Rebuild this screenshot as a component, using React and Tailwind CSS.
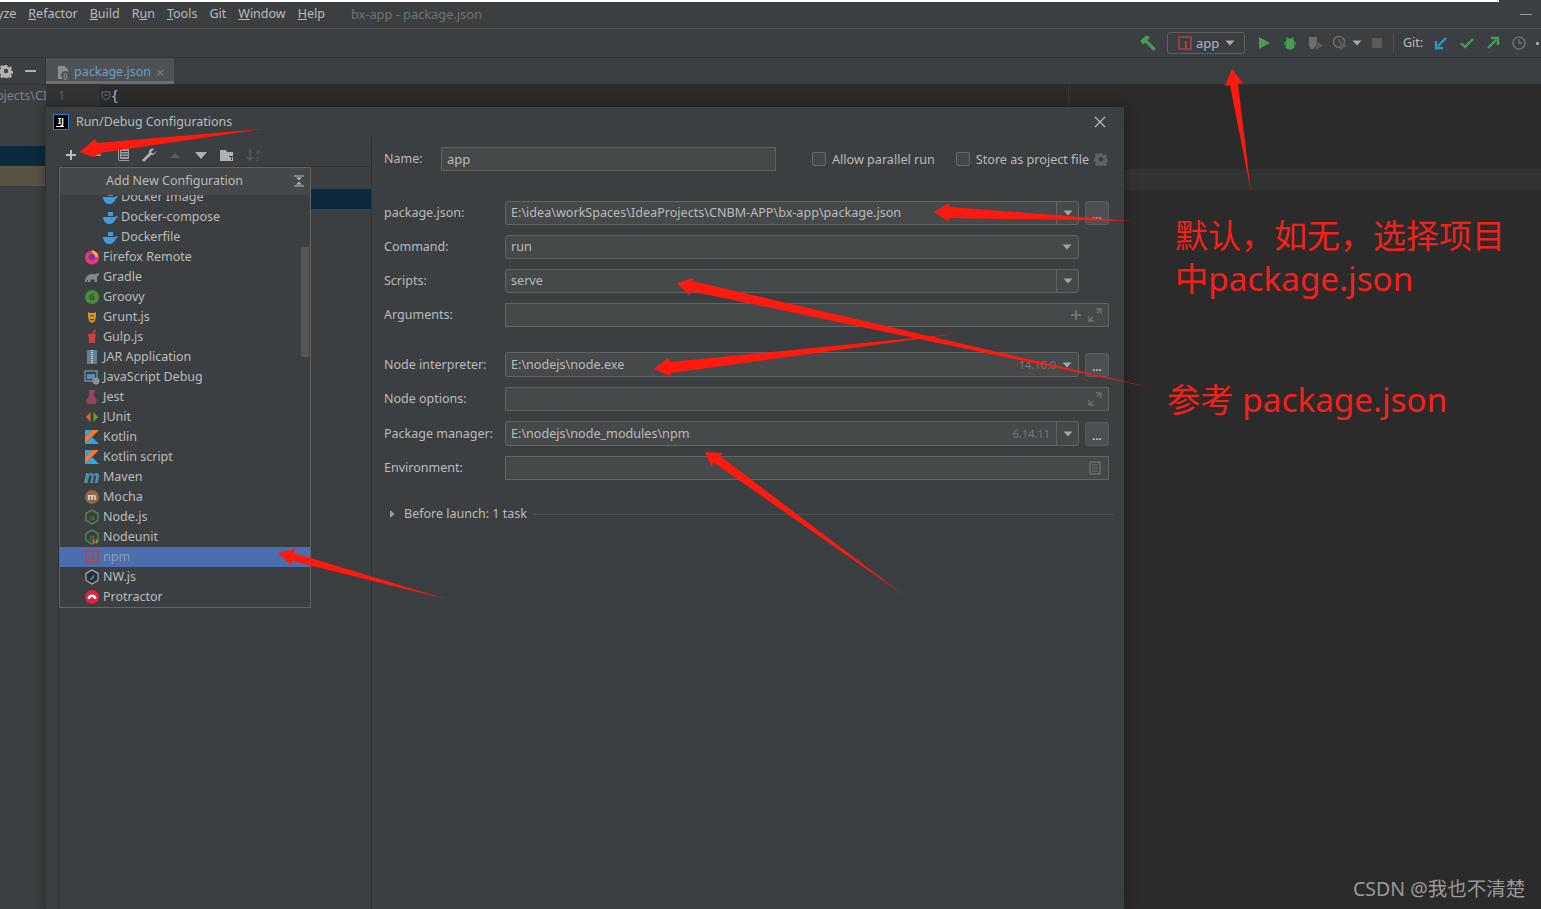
import React from "react";

const Svg = ({ s = 16, v = "0 0 16 16", className = "", children }) => (
  <svg width={s} height={s} viewBox={v} className={"shrink-0 " + className}>{children}</svg>
);

const Caret = ({ c = "#a3a6a9", s = 12 }) => (
  <Svg s={s} v="0 0 12 12"><path d="M1.500 3.500h9L6 8.500z" fill={c} /></Svg>
);

const Gear = ({ c = "#afb1b3", s = 14 }) => (
  <Svg s={s} v="0 0 16 16">
    <path fillRule="evenodd" fill={c} d="M6.6 1h2.8l.4 2 1.3.6 1.8-1.1 2 2-1.1 1.8.6 1.3 2 .4v2.8l-2 .4-.6 1.3 1.1 1.8-2 2-1.8-1.1-1.3.6-.4 2H6.6l-.4-2-1.3-.6-1.8 1.1-2-2 1.1-1.8-.6-1.3-2-.4V6.6l2-.4.6-1.3-1.1-1.8 2-2 1.8 1.1 1.3-.6zM8 5.500a2.500 2.500 0 1 0 0 5 2.500 2.500 0 0 0 0-5z" />
  </Svg>
);

const Npm = ({ s = 14 }) => (
  <Svg s={s} v="0 0 14 14">
    <rect x="1" y="1" width="12" height="12" fill="none" stroke="#c93d3d" strokeWidth="1.400" />
    <rect x="7" y="5" width="1.600" height="7" fill="#c93d3d" />
  </Svg>
);

const Docker = () => (
  <Svg s={15} v="0 0 15 15">
    <rect x="5" y="2" width="5" height="4" fill="#3d9be0" />
    <path d="M0 7h12l1.200-1 1.800.8c-.6 1.200-1.400 1.600-2.200 1.600C12 11 10 14 6 14 2.500 14 .4 11 0 7z" fill="#3d9be0" />
  </Svg>
);

const Hex = ({ c = "#5c8f50", extra }) => (
  <Svg s={16} v="0 0 16 16">
    <path d="M8 1l6 3.400v7L8 15l-6-3.600v-7z" fill="none" stroke={c} strokeWidth="1.200" />
    <text x="8" y="10.500" textAnchor="middle" fontSize="6" fill={c} fontFamily="Noto Sans">JS</text>
    {extra}
  </Svg>
);

const Kotlin = () => (
  <Svg s={14} v="0 0 14 14">
    <path d="M0 0h7L0 7z" fill="#2fa6e8" />
    <path d="M7 0h7L0 14V7z" fill="#ee7b3a" />
    <path d="M0 14l7-7 7 7z" fill="#2fa6e8" />
  </Svg>
);

const listItems = [
  ["Docker Image", <Docker />, true],
  ["Docker-compose", <Docker />, true],
  ["Dockerfile", <Docker />, true],
  ["Firefox Remote", <Svg><circle cx="8" cy="8.500" r="7" fill="#e8396a" /><path d="M8 1c3 1 6 3 6 7H9z" fill="#f7b733" /><circle cx="8" cy="8" r="3.200" fill="#6a3bb5" /></Svg>],
  ["Gradle", <Svg><path d="M1 13c0-5 3-8 7-8 2 0 3 1 4 0 1-1.500 3-1 3 .5 0 1.500-1.500 2-2 2v5.500h-2.500v-2.500h-4v2.500H4v-2H3v2z" fill="#7c8a93" /></Svg>],
  ["Groovy", <Svg><circle cx="8" cy="8" r="7" fill="#4d8a3f" /><text x="8" y="11" textAnchor="middle" fontSize="8" fontWeight="700" fill="#2f5527" fontFamily="Noto Sans">G</text></Svg>],
  ["Grunt.js", <Svg><path d="M4 3l2 1h4l2-1v4l-1 5-3 2-3-2-1-5z" fill="#d89a2b" /><rect x="6" y="6" width="1.500" height="1.500" fill="#6e3d10" /><rect x="8.500" y="6" width="1.500" height="1.500" fill="#6e3d10" /><rect x="6" y="10" width="4" height="1.200" fill="#6e3d10" /></Svg>],
  ["Gulp.js", <Svg><path d="M4 5h8l-1 5v4H5v-4z" fill="#c9403f" /><path d="M8.500 5l1.500-4h2l-2 4z" fill="#c9403f" /></Svg>],
  ["JAR Application", <Svg><rect x="3" y="1" width="10" height="14" fill="#5f8296" /><path d="M8 1v14" stroke="#c7d3da" strokeWidth="2" strokeDasharray="1 1" /></Svg>],
  ["JavaScript Debug", <Svg><rect x="1" y="2" width="12" height="10" fill="none" stroke="#8a9aa5" strokeWidth="1.200" /><rect x="3" y="5" width="8" height="5" fill="#4f8fc0" /><circle cx="12" cy="12" r="3.500" fill="#8a9199" /></Svg>],
  ["Jest", <Svg><path d="M5 1h6l-1.500 5 3.500 5-1.500 4h-8L2 11l3-3z" fill="#99425b" /></Svg>],
  ["JUnit", <Svg><path d="M6.500 3v10L2 8z" fill="#e2682b" /><path d="M9.500 3v10L14 8z" fill="#62a33f" /></Svg>],
  ["Kotlin", <Kotlin />],
  ["Kotlin script", <Kotlin />],
  ["Maven", <Svg><path d="M0 14L2 4h2.500l-.3 1.500C5 4.500 6 4 7 4s2 .6 2.300 1.700C10.200 4.600 11.300 4 12.400 4c2 0 3.100 1.300 2.700 3.400L13.800 14h-3l1.200-6c.2-1-.2-1.500-1-1.500s-1.400.6-1.600 1.600L9.200 14h-3l1.200-6c.2-1-.2-1.500-1-1.500S5 7.100 4.800 8.100L3.600 14z" fill="#4a8dad" /></Svg>],
  ["Mocha", <Svg><circle cx="8" cy="8" r="7" fill="#8d6748" /><text x="8" y="11" textAnchor="middle" fontSize="9" fontWeight="700" fill="#e8e0d8" fontFamily="Noto Sans">m</text></Svg>],
  ["Node.js", <Hex />],
  ["Nodeunit", <Hex extra={<g><path d="M10.500 10v5L8 12.500z" fill="#e2682b" /><path d="M12 10v5l3-2.500z" fill="#62a33f" /></g>} />],
  ["npm", <Npm />],
  ["NW.js", <Svg><path d="M8 1l6 3.400v7L8 15l-6-3.600v-7z" fill="#2b2d30" stroke="#a9adb1" strokeWidth="1.200" /><path d="M5 11l6-6-2 5z" fill="#4f8fc0" /></Svg>],
  ["Protractor", <Svg><circle cx="8" cy="8" r="7" fill="#e2233f" /><path d="M3.500 10a4.500 4.500 0 0 1 9 0z" fill="#fff" /><path d="M6 10a2 2 0 0 1 4 0z" fill="#e2233f" /></Svg>],
];

const Dots = () => (
  <div className="ml-[6px] w-6 h-6 rounded-[3px] border border-[#5a5d5f] bg-[#4c5052] flex items-end justify-center pb-[4px] text-[#d0d0d0] text-[11px] leading-[10px] font-bold">...</div>
);

const Field = ({ label, value, hint, kind, wide, browse, sep, right, h = "h-6", mt, lt = "" }) => (
  <div className={"flex items-center " + mt}>
    <div className={"w-[121px] shrink-0 text-[#bbbbbb] " + lt}>{label}</div>
    <div className={`${wide ? "w-[604px] rounded-none" : "w-[574px] rounded-[3px]"} ${h} border border-[#646464] bg-[#45494a] flex items-center pl-[5px] text-[#bbbbbb] text-[12.6px]`}>
      <span className="flex-1 truncate leading-[18px]">{value}</span>
      {hint && <span className={`text-[#787878] text-[11px] leading-[14px] ${sep ? "mr-[6px]" : "mr-0"}`}>{hint}</span>}
      {kind === "combo" && (
        <div className={`w-[22px] h-full flex items-center justify-center ${sep ? "border-l border-[#646464]" : ""}`}><Caret /></div>
      )}
      {right}
    </div>
    {browse && <Dots />}
  </div>
);

const Expand = () => (
  <Svg s={14} v="0 0 14 14"><path d="M8 1h5v5M13 1L9 5M1 8v5h5M1 13l4-4" fill="none" stroke="#6f7274" strokeWidth="1.300" /></Svg>
);

const Check = ({ label, className = "" }) => (
  <div className={"flex items-center text-[#bbbbbb] text-[12.6px] " + className}>
    <div className="w-[14px] h-[14px] rounded-[2px] border border-[#6b6b6b] bg-[#43494a] mr-[6px]" />
    <span className="pt-[2px]">{label}</span>
  </div>
);

const U = ({ children, rest }) => (
  <span><span className="underline">{children}</span>{rest}</span>
);

const redPolys = [
  "80,152 95,139 97,143 263,129 100,153 93,157",
  "1232,69 1225,86 1230,85 1251,192 1238,84 1243,83",
  "934,212 949,203 950,207 1132,221 949,218 949,222",
  "677,283 694,278 692,281 1153,388 690,291 690,296",
  "654,369 668,358 670,362 955,334 671,373 670,376",
  "705,452 723,453 720,456 905,596 713,462 712,467",
  "278,553 295,549 294,553 446,599 292,561 291,565",
];

export default function App() {
  return (
    <div className="relative w-[1541px] h-[909px] overflow-hidden bg-[#2b2b2b] text-[12.5px] leading-none" style={{ fontFamily: '"Noto Sans","Noto Sans CJK SC",sans-serif' }}>
      {/* white strip */}
      <div className="h-[2px] bg-[#3c3f41]"><div className="h-full w-[1499px] bg-white" /></div>

      {/* menu */}
      <div className="h-[27px] bg-[#3c3f41] border-b border-[#515151] flex items-center pb-[2px] text-[#bbbbbb] relative">
        <div className="flex gap-3 -ml-[3px] leading-[16px]">
          <span>yze</span>
          <U rest="efactor">R</U>
          <U rest="uild">B</U>
          <span>R<span className="underline">u</span>n</span>
          <U rest="ools">T</U>
          <span>Git</span>
          <U rest="indow">W</U>
          <U rest="elp">H</U>
        </div>
        <span className="ml-[26px] text-[#6f7375] text-[12.8px] leading-[16px]">bx-app - package.json</span>
        <div className="ml-auto mr-[9px] w-[12px] h-px bg-[#9a9da0]" />
      </div>

      {/* toolbar */}
      <div className="h-[29px] bg-[#3c3f41] border-b border-[#323232] flex items-center">
        <div className="ml-[1139px]">
          <Svg s={18}>
            <path d="M1 6l5.500-5L10 3 7.500 5.500 15 13l-2 2-7.500-7.500-2 2z" fill="#499c54" />
          </Svg>
        </div>
        <div className="ml-[10px] w-[78px] h-[22px] rounded-[3px] border border-[#5e6060] flex items-center pl-[10px] text-[#a9b7c6] text-[13px] leading-[18px]">
          <Npm />
          <span className="ml-[4px]">app</span>
          <span className="ml-[5px]"><Caret c="#a9abad" /></span>
        </div>
        <div className="ml-[11px]"><Svg><path d="M3 2l11 6-11 6z" fill="#499c54" /></Svg></div>
        <div className="ml-[10px]"><Svg><path d="M5 2l1.200 1.500h3.600L11 2l1 1-1 1.500 1 1V7h2v1h-2v1h2v1h-2v1l1 1-3 2.500H6L3 12l1-1v-1H2V9h2V8H2V7h2V5.500l1-1L4 3z" fill="#499c54" /></Svg></div>
        <div className="ml-[10px]"><Svg><path d="M1 2h8v6l-3 6H3l-2-4z" fill="#6e6e6e" /><path d="M8 6l7 4.500L8 15z" fill="#595b5d" /></Svg></div>
        <div className="ml-[8px]"><Svg><circle cx="7" cy="7" r="5.500" fill="none" stroke="#6e6e6e" strokeWidth="1.500" /><path d="M7 4v3h3" fill="none" stroke="#6e6e6e" /><path d="M8 7l7 4-7 4z" fill="#595b5d" /></Svg></div>
        <div className="ml-[3px]"><Caret c="#aaaaaa" /></div>
        <div className="ml-[9px] w-[10px] h-[10px] bg-[#5a5a5a]" />
        <div className="ml-[11px] w-px h-5 bg-[#515151]" />
        <span className="ml-[9px] text-[#bbbbbb] w-[20px] leading-[16px]">Git:</span>
        <div className="ml-[10px]"><Svg><path d="M13 3L5 11M3 6v7h7" fill="none" stroke="#3592c4" strokeWidth="2.400" /></Svg></div>
        <div className="ml-[10px]"><Svg><path d="M2 8l4 4 8-8" fill="none" stroke="#499c54" strokeWidth="2.400" /></Svg></div>
        <div className="ml-[10px]"><Svg><path d="M3 13l8-8M6 3h7v7" fill="none" stroke="#499c54" strokeWidth="2.400" /></Svg></div>
        <div className="ml-[10px]"><Svg><circle cx="8" cy="8" r="6" fill="none" stroke="#6e6e6e" strokeWidth="1.600" /><path d="M8 4v4h3" fill="none" stroke="#6e6e6e" strokeWidth="1.400" /></Svg></div>
        <div className="ml-[9px] w-[3px] h-[3px] rounded-full bg-[#bbbbbb]" />
      </div>

      {/* tab bar */}
      <div className="h-[27px] bg-[#3c3f41] flex border-b border-[#323232]">
        <div className="w-[46px] flex items-center overflow-hidden border-r border-[#323232]">
          <div className="-ml-[1px]"><Gear /></div>
          <div className="ml-[12px] w-[11px] h-[2px] bg-[#afb1b3]" />
        </div>
        <div className="w-[128px] bg-[#4e5254] border-b-[3px] border-[#6b6f71] flex items-center pl-[10px] pt-[5px]">
          <Svg s={15}><path d="M2 1h7l4 4v10H2z" fill="#8a8d8f" /><circle cx="10" cy="11" r="4.500" fill="#4e5254" /><text x="10" y="13.500" textAnchor="middle" fontSize="7" fill="#a9abad" fontFamily="Noto Sans">{"{}"}</text></Svg>
          <span className="ml-[3px] text-[#6a9fc9] text-[12.5px] leading-[16px]">package.json</span>
          <span className="ml-[5px] text-[#7b7e80] text-[15px]">×</span>
        </div>
      </div>

      {/* workspace */}
      <div className="flex h-[824px]">
        <div className="w-[46px] shrink-0 bg-[#3c3f41] overflow-hidden text-[#7f8284]">
          <div className="h-[61px] pt-[3px] -ml-[4px] whitespace-nowrap leading-[16px]">ojects\CI</div>
          <div className="h-5 bg-[#0d293e]" />
          <div className="h-5 bg-[#5a5344]" />
        </div>
        <div className="flex-1 min-w-0">
          <div className="h-[22px] flex items-center relative">
            <div className="w-[54px] h-full bg-[#313335] flex items-center pl-[12px] text-[#606366]">1</div>
            <div className="ml-[1px]"><Svg s={10} v="0 0 10 10"><path d="M1 1h8v5L5 9 1 6z" fill="none" stroke="#6b6e70" /><path d="M3 4h4" stroke="#6b6e70" /></Svg></div>
            <span className="ml-[1px] -mt-[3px] text-[#a9b7c6] text-[15px]">{"{"}</span>
            <div className="absolute left-[1022px] top-0 h-full w-px bg-[#3a3a3a]" />
          </div>
          <div className="mt-[62px] ml-[1078px] h-[21px] bg-[#323232]" />
        </div>
      </div>

      {/* dialog */}
      <div className="absolute left-[45px] top-[107px] w-[1079px] h-[802px] bg-[#3c3f41] border-l border-[#323232] shadow-[0_0_12px_rgba(0,0,0,0.35)] flex flex-col">
        <div className="h-[30px] flex items-center pl-[7px] shrink-0">
          <div className="w-[16px] h-[16px] bg-black border border-[#2f7fd0] flex flex-col items-center justify-center text-white text-[8px] font-bold leading-[8px]">IJ<div className="w-2 h-px bg-white mt-[1px] self-start ml-[2px]" /></div>
          <span className="ml-[7px] text-[#bbbbbb] text-[12.4px] leading-[16px]">Run/Debug Configurations</span>
          <div className="ml-auto mr-[18px]"><Svg s={12} v="0 0 12 12"><path d="M1 1l10 10M11 1L1 11" stroke="#bbbbbb" strokeWidth="1.200" /></Svg></div>
        </div>

        <div className="flex flex-1 min-h-0">
          {/* left column */}
          <div className="w-[326px] shrink-0 border-r border-[#323232] flex flex-col">
            <div className="h-[29px] pt-[7px] flex items-center pl-[17px] gap-[10px]">
              <Svg><path d="M3 8h10M8 3v10" stroke="#bbbbbb" strokeWidth="2" /></Svg>
              <Svg><path d="M4 8h8" stroke="#8a8d8f" strokeWidth="2" /></Svg>
              <Svg><path d="M2 3h2v11h10v-1H3V3zM5 2h9v10H5z" fill="#9a9da0" /><path d="M6 4.500h7M6 7h7M6 9.500h7" stroke="#3c3f41" /></Svg>
              <Svg><path d="M15 4l-3 3-2-2 3-3c-2-1-4 0-5 2v2L1 13l2 2 7-7h2c2-1 3-3 3-4z" fill="#afb1b3" /></Svg>
              <Svg><path d="M3 11h10L8 6z" fill="#5a5d5f" /></Svg>
              <Svg><path d="M2 5h12L8 12z" fill="#afb1b3" /></Svg>
              <Svg><path d="M1 3h6l1 2h6v9H1z" fill="#afb1b3" /><path d="M10 9h5v1h-2v3h-1v-3h-2z" fill="#3c3f41" /></Svg>
              <Svg><path d="M5 2v11M2 10l3 3 3-3" fill="none" stroke="#5a5d5f" strokeWidth="1.500" /><text x="11" y="7" fontSize="7" fill="#5a5d5f" fontFamily="Noto Sans">a</text><text x="11" y="14" fontSize="7" fill="#5a5d5f" fontFamily="Noto Sans">z</text></Svg>
            </div>
            <div className="ml-[12px] flex-1 border-l border-t border-[#323232] relative">
              <div className="mt-[22px] h-[20px] bg-[#0d293e]" />
              {/* popup */}
              <div className="absolute left-0 top-0 w-[252px] h-[441px] border border-[#646464] bg-[#3c3f41] flex flex-col overflow-hidden">
                <div className="h-[27px] shrink-0 bg-[#45484a] flex items-center pl-[46px] text-[#bbbbbb] text-[12.5px] leading-[16px] relative z-10 pb-[1px]">
                  Add New Configuration
                  <div className="ml-auto mr-[5px]"><Svg s={12} v="0 0 12 12"><path d="M1 1h10M1 11h10" stroke="#bbbbbb" /><path d="M3 2.500h6L6 5.300zM3 9.500h6L6 6.700z" fill="#bbbbbb" /></Svg></div>
                </div>
                <div className="relative -mt-[8px] flex-1">
                  {listItems.map(([name, icon, nested]) => (
                    <div key={name} className={`h-5 flex items-center leading-[16px] ${nested ? "pl-[42px]" : "pl-[24px]"} ${name === "npm" ? "bg-[#4b6eaf] text-[#8f9cb5]" : "text-[#bbbbbb]"}`}>
                      <div className="w-[16px] flex justify-center shrink-0 mr-[3px]">{icon}</div>
                      <span>{name}</span>
                    </div>
                  ))}
                  <div className="absolute right-[1px] top-[60px] w-2 h-[110px] bg-[#535556]" />
                </div>
              </div>
            </div>
          </div>

          {/* form */}
          <div className="flex-1 pl-[12px] pr-[12px] flex flex-col">
            <div className="flex items-center h-6 mt-[10px]">
              <span className="w-[57px] text-[#bbbbbb]">Name:</span>
              <div className="w-[335px] h-6 border border-[#646464] bg-[#45494a] flex items-center pl-[5px] text-[#bbbbbb] text-[13px] leading-[18px]">app</div>
              <Check label="Allow parallel run" className="ml-[36px]" />
              <Check label="Store as project file" className="ml-[21px]" />
              <div className="ml-[5px]"><Gear c="#5f6264" s={14} /></div>
            </div>
            <Field mt="mt-[30px]" label="package.json:" value="E:\idea\workSpaces\IdeaProjects\CNBM-APP\bx-app\package.json" kind="combo" sep browse />
            <Field mt="mt-[10px]" label="Command:" value="run" kind="combo" />
            <Field mt="mt-[10px]" label="Scripts:" value="serve" kind="combo" sep />
            <Field mt="mt-[10px]" label="Arguments:" wide right={<div className="flex items-center gap-[6px] mr-[6px]"><Svg s={12} v="0 0 12 12"><path d="M1 6h10M6 1v10" stroke="#6f7274" strokeWidth="2" /></Svg><Expand /></div>} />
            <Field mt="mt-[25px]" lt="pt-[2px]" label="Node interpreter:" value="E:\nodejs\node.exe" hint="14.16.0" kind="combo" browse h="h-[25px]" />
            <Field mt="mt-[10px]" label="Node options:" wide right={<div className="mr-[6px]"><Expand /></div>} />
            <Field mt="mt-[10px]" lt="pt-[2px]" label="Package manager:" value="E:\nodejs\node_modules\npm" hint="6.14.11" kind="combo" sep browse h="h-[25px]" />
            <Field mt="mt-[10px]" label="Environment:" wide right={<div className="mr-[6px]"><Svg s={14} v="0 0 14 14"><rect x="2" y="1" width="10" height="12" fill="none" stroke="#6f7274" strokeWidth="1.400" /><path d="M4 4h6M4 7h6M4 10h6" stroke="#6f7274" /></Svg></div>} />
            <div className="flex items-center mt-[26px] text-[#bbbbbb]">
              <div className="ml-[3px]"><Svg s={10} v="0 0 10 10"><path d="M3 1v8l4.500-4z" fill="#9a9da0" /></Svg></div>
              <span className="ml-[7px] whitespace-nowrap shrink-0 leading-[16px]">Before launch: 1 task</span>
              <div className="ml-[6px] w-[580px] h-px bg-[#515151]" />
            </div>
          </div>
        </div>
      </div>

      {/* annotations */}
      <svg className="absolute inset-0 pointer-events-none" width="1541" height="909" viewBox="0 0 1541 909">
        {redPolys.map((p) => <polygon key={p} points={p} fill="#fe1a0e" />)}
      </svg>
      <div className="absolute left-[1175px] top-[214px] w-[340px] text-[#f5201a] text-[33.3px] leading-[42px] font-normal">
        <span className="text-[33px]">默认，如无，选择项目</span><br />中package.json
      </div>
      <div className="absolute left-[1167px] top-[378px] text-[#f5201a] text-[33.3px] leading-[43px] whitespace-nowrap">参考 package.json</div>
      <div className="absolute left-[1353px] top-[877px] text-[#9a9a9a] text-[19.5px] leading-[24px] whitespace-nowrap">CSDN @我也不清楚</div>
    </div>
  );
}
